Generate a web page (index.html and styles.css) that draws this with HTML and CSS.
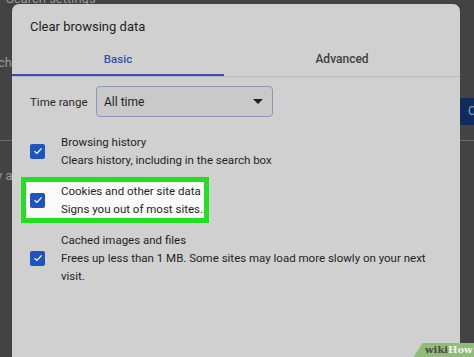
FILE: index.html
```html
<!DOCTYPE html>
<html>
<head>
<meta charset="utf-8">
<link rel="stylesheet" href="styles.css">
</head>
<body>
<div class="page">
  <div class="bg">
    <div class="bg-search">Search settings</div>
    <div class="bg-row bg-row1"><span class="bg-text">ch</span></div>
    <div class="bg-row bg-row2"><span class="bg-btn">C</span></div>
    <div class="bg-rule"></div>
    <div class="bg-row bg-row3"><span class="bg-text">y a</span></div>
  </div>

  <div class="dialog">
    <div class="title">Clear browsing data</div>
    <div class="tabs">
      <div class="tab tab-basic active">Basic</div>
      <div class="tab tab-adv">Advanced</div>
    </div>
    <div class="body">
      <div class="range">
        <span class="range-label">Time range</span>
        <div class="select">
          <span>All time</span>
          <svg class="caret" width="10" height="6" viewBox="0 0 10 6"><path d="M0 0 L10 0 L5 5 Z" fill="#222"/></svg>
        </div>
      </div>

      <div class="item">
        <span class="check"><svg width="10" height="8" viewBox="0 0 10 8"><path d="M1.5 4.3 L3.9 6.4 L8.6 1.4" fill="none" stroke="#fff" stroke-width="1.3"/></svg></span>
        <div class="item-text">
          <div class="item-title">Browsing history</div>
          <div class="item-desc">Clears history, including in the search box</div>
        </div>
      </div>

      <div class="item item-hl">
        <span class="check"><svg width="10" height="8" viewBox="0 0 10 8"><path d="M1.5 4.3 L3.9 6.4 L8.6 1.4" fill="none" stroke="#fff" stroke-width="1.3"/></svg></span>
        <div class="item-text">
          <div class="item-title">Cookies and other site data</div>
          <div class="item-desc">Signs you out of most sites.</div>
        </div>
      </div>

      <div class="item item-last">
        <span class="check"><svg width="10" height="8" viewBox="0 0 10 8"><path d="M1.5 4.3 L3.9 6.4 L8.6 1.4" fill="none" stroke="#fff" stroke-width="1.3"/></svg></span>
        <div class="item-text">
          <div class="item-title">Cached images and files</div>
          <div class="item-desc">Frees up less than 1 MB. Some sites may load more slowly on your next visit.</div>
        </div>
      </div>
    </div>
  </div>

  <div class="wikihow"><span class="wiki">wiki</span><span class="how">How</span></div>
</div>
</body>
</html>
```

FILE: styles.css
```css
* { box-sizing: border-box; }
html, body { margin: 0; padding: 0; }
body {
  width: 474px;
  height: 357px;
  overflow: hidden;
  background: #434343;
  font-family: Roboto, "Liberation Sans", sans-serif;
}
.page {
  position: relative;
  width: 474px;
  height: 357px;
  overflow: hidden;
}
.bg {
  display: flex;
  flex-direction: column;
  color: #8e8e8e;
  font-size: 13px;
}
.bg-search {
  margin-top: -8px;
  padding-left: 6px;
  height: 14px;
  line-height: 14px;
  color: #9a9a9a;
}
.bg-row { display: flex; align-items: center; }
.bg-row1 { height: 20px; margin-top: 46px; }
.bg-text { color: #9a9a9a; margin-left: -2px; font-size: 13px; }
.bg-row2 { height: 27px; margin-top: 26px; justify-content: flex-end; }
.bg-btn {
  width: 30px;
  height: 27px;
  background: #0f2c5c;
  color: #8fa3c6;
  line-height: 27px;
  padding-left: 8px;
  font-size: 12px;
  margin-right: -16px;
}
.bg-rule { height: 1px; background: #6e6e6e; margin-top: 15px; }
.bg-row3 { height: 20px; margin-top: 24px; }
.bg-row3 .bg-text { margin-left: -4px; }

.dialog {
  position: absolute;
  left: 12px;
  top: 4px;
  width: 448px;
  bottom: -10px;
  background: #d0d0d0;
  border-radius: 7px 7px 0 0;
  color: #222;
}
.title {
  font-size: 13px;
  line-height: 20px;
  padding: 13px 0 0 18px;
  color: #1e1e1e;
}
.tabs {
  display: flex;
  margin-top: 4px;
  border-bottom: 1px solid #b9b9b9;
}
.tab {
  height: 35px;
  display: flex;
  align-items: center;
  justify-content: center;
  font-size: 11.5px;
  font-weight: 500;
  color: #3f3f3f;
}
.tab-basic { width: 212px; }
.tab-adv { flex: 1; font-size: 12px; }
.tab.active {
  color: #3450a8;
  box-shadow: inset 0 -2px 0 #3e4fa8;
}
.body { padding: 9px 0 0 18px; }
.range {
  display: flex;
  align-items: center;
  height: 31px;
}
.range-label { font-size: 11.5px; width: 66px; color: #2a2a2a; }
.select {
  width: 177px;
  height: 31px;
  border: 1.5px solid #8799b8;
  border-radius: 4px;
  background: #c9c9c9;
  display: flex;
  align-items: center;
  justify-content: space-between;
  padding: 0 9px 0 7px;
  font-size: 12px;
  color: #1e1e1e;
}
.caret { margin-top: 1px; }

.item {
  display: flex;
  align-items: center;
  font-size: 11.5px;
  line-height: 18px;
  color: #1f1f1f;
}
.range + .item { margin-top: 16px; }
.check {
  width: 15px;
  height: 15px;
  border-radius: 2px;
  background: #1c54c0;
  display: flex;
  align-items: center;
  justify-content: center;
  flex: none;
  margin-right: 16px;
}
.item-text { flex: 1; padding-right: 30px; }
.item-hl {
  margin: 8px 0 0 -9px;
  width: 188px;
  padding: 0 0 0 4px;
  border: 5px solid #21e021;
  background: #fbfbfb;
}
.item-hl .item-text { padding-right: 0; }
.item-last { margin-top: 8px; }

.wikihow {
  position: absolute;
  right: -6px;
  bottom: 0;
  height: 14px;
  width: 62px;
  background: #93bb78;
  transform: skewX(-33deg);
  display: flex;
  align-items: center;
  justify-content: center;
  font-family: "DejaVu Serif", "Liberation Serif", serif;
  font-weight: bold;
  font-size: 10px;
  line-height: 14px;
}
.wikihow span { transform: skewX(33deg); display: inline-block; }
.wiki { color: #4a4a4a; }
.how { color: #f2f2f2; }
```
